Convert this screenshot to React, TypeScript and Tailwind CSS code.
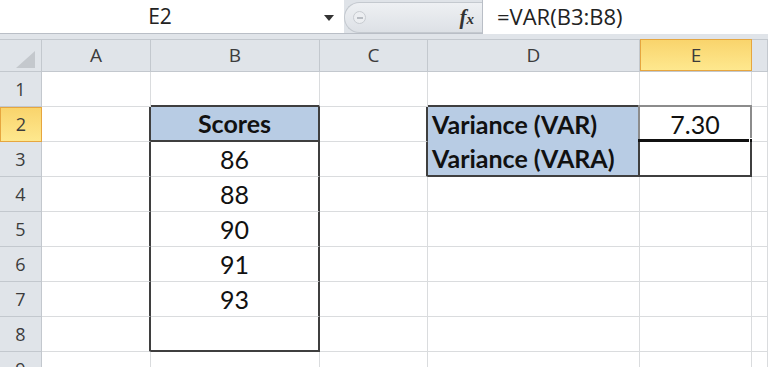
import React from 'react';

const COLS = ['A', 'B', 'C', 'D', 'E', 'F'];
const ROWS = [1, 2, 3, 4, 5, 6, 7, 8, 9];

const uiFont = { fontFamily: '"Open Sans", "Noto Sans", sans-serif' };
const cellFont = { fontFamily: 'Lato, "Liberation Sans", sans-serif' };

type Cell = { text?: string; bold?: boolean; align?: 'left' | 'center'; fill?: boolean };

const data: Record<string, Cell> = {
  B2: { text: 'Scores', bold: true, align: 'center', fill: true },
  B3: { text: '86', align: 'center' },
  B4: { text: '88', align: 'center' },
  B5: { text: '90', align: 'center' },
  B6: { text: '91', align: 'center' },
  B7: { text: '93', align: 'center' },
  D2: { text: 'Variance (VAR)', bold: true, align: 'left', fill: true },
  D3: { text: 'Variance (VARA)', bold: true, align: 'left', fill: true },
  E2: { text: '7.30', align: 'center' },
};

// cells whose right / bottom edge carries the dark table border
const darkRight = new Set(['A2', 'A3', 'A4', 'A5', 'A6', 'A7', 'A8', 'B2', 'B3', 'B4', 'B5', 'B6', 'B7', 'B8', 'C2', 'C3', 'D2', 'D3', 'E2', 'E3']);
const darkBottom = new Set(['B1', 'B2', 'B8', 'D1', 'E1', 'D3', 'E3']);

function FormulaBar() {
  return (
    <div className="flex h-[34px] border-b border-[#b9bec6] bg-[#dfe3e8]" style={uiFont}>
      <div className="relative flex w-[344px] items-center justify-center bg-white pl-[8px]">
        <span className="ml-[-32px] text-[21px] text-[#222]">E2</span>
        <span className="absolute right-[10px] top-[15px] h-0 w-0 border-x-[5px] border-t-[6px] border-x-transparent border-t-[#333]" />
      </div>
      <div className="flex flex-1 items-center pt-[2px]">
        <div className="flex h-[31px] w-[138px] items-center rounded-l-full border border-r-0 border-[#c4c9cf] bg-gradient-to-b from-[#eef0f3] to-[#dde1e6]">
          <div className="ml-[8px] flex h-[13px] w-[13px] items-center justify-center rounded-full border border-[#c8ccd1] bg-[#eceef1]">
            <div className="h-[2px] w-[6px] bg-[#b8bcc2]" />
          </div>
          <span className="ml-auto mr-[8px] text-[21px] font-bold italic text-[#333]" style={{ fontFamily: '"Liberation Serif", serif' }}>
            f<span className="text-[15px]">x</span>
          </span>
        </div>
        <div className="mt-[-2px] flex h-[34px] flex-1 items-center border-l border-[#b9bec6] bg-white pl-[14px]">
          <span className="text-[22px] text-[#222]">=VAR(B3:B8)</span>
        </div>
      </div>
    </div>
  );
}

function ColumnHeader() {
  return (
    <div className="grid h-[38px] grid-cols-[42px_109px_169px_108px_212px_112px_1fr] border-b border-[#c3c8ce] bg-[#e0e4e9] pt-[5px]" style={uiFont}>
      <div className="flex items-end justify-end border-r border-t border-[#c3c8ce] pb-[3px] pr-[6px]">
        <svg width="19" height="17" viewBox="0 0 19 17">
          <polygon points="19,0 19,17 0,17" fill="#c4c8cd" />
        </svg>
      </div>
      {COLS.map((c) =>
        c === 'E' ? (
          <div key={c} className="flex items-center justify-center border border-[#e6a63f] bg-gradient-to-b from-[#f9d46c] to-[#fee88e] text-[19px] text-[#3c3c3c]">
            {c}
          </div>
        ) : (
          <div key={c} className="flex items-center justify-center border-r border-t border-[#c3c8ce] text-[19px] text-[#3c3c3c]">
            {c === 'F' ? '' : c}
          </div>
        ),
      )}
    </div>
  );
}

function GridCell({ id }: { id: string }) {
  const cell = data[id];
  const right = darkRight.has(id) ? 'border-r-2 border-r-[#3f3f3f]' : 'border-r border-r-[#dadcde]';
  let bottom = darkBottom.has(id) ? 'border-b-2 border-b-[#3f3f3f]' : 'border-b border-b-[#dadcde]';
  if (id === 'D2') bottom = 'border-b border-b-[#b8cce4]';
  if (id === 'E2') bottom = 'border-b border-b-transparent';
  return (
    <div
      className={`relative flex items-center ${right} ${bottom} ${cell?.fill ? 'bg-[#b8cce4]' : 'bg-white'} ${
        cell?.align === 'left' ? 'justify-start pl-[4px]' : 'justify-center'
      }`}
      style={cellFont}
    >
      {cell?.text && (
        <span className={`text-[25px] leading-none text-[#111] ${cell.bold ? 'font-bold' : ''}`}>{cell.text}</span>
      )}
      {id === 'E2' && (
        <>
          <div className="pointer-events-none absolute inset-x-[-2px] top-[-2px] bottom-[2px] border-x-2 border-t-2 border-[#8c8c8c]" />
          <div className="pointer-events-none absolute bottom-[-2px] left-[-2px] right-[-2px] h-[4px] bg-[#111]" />
          <div className="pointer-events-none absolute bottom-[-3px] right-[-5px] h-[6px] w-[6px] border border-white bg-[#111]" />
        </>
      )}
    </div>
  );
}

export default function App() {
  return (
    <div className="h-[367px] w-[768px] overflow-hidden bg-white">
      <FormulaBar />
      <ColumnHeader />
      <div className="grid auto-rows-[35px] grid-cols-[42px_109px_169px_108px_212px_112px_1fr]">
        {ROWS.map((r) => (
          <React.Fragment key={r}>
            <div
              className={`flex items-center justify-center text-[18px] text-[#3c3c3c] ${
                r === 2
                  ? 'border border-[#e6a63f] bg-gradient-to-b from-[#f9d46c] to-[#fee88e]'
                  : 'border-b border-r border-[#c3c8ce] bg-[#e0e4e9]'
              }`}
              style={uiFont}
            >
              {r}
            </div>
            {COLS.map((c) => (
              <GridCell key={c + r} id={c + r} />
            ))}
          </React.Fragment>
        ))}
      </div>
    </div>
  );
}
